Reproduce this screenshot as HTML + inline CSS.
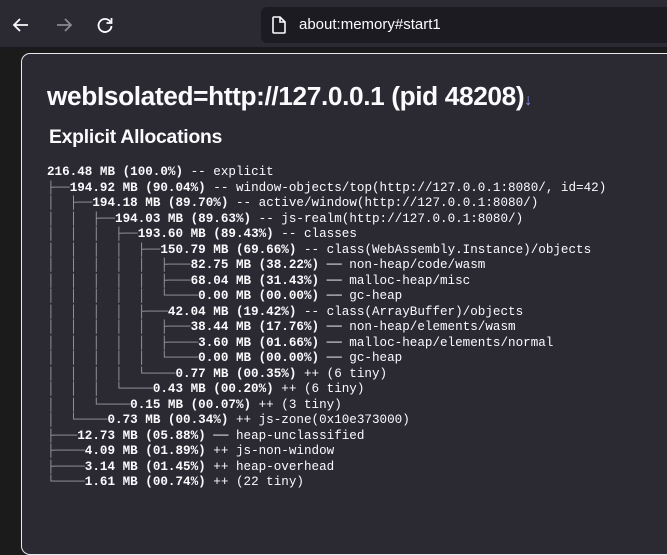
<!DOCTYPE html>
<html><head><style>
html,body{margin:0;padding:0;width:667px;height:500px;overflow:hidden;background:#1c1b1c;font-family:"Liberation Sans",sans-serif}
.bar{position:absolute;left:0;top:0;width:667px;height:47px;background:#2b2a33;border-bottom:2px solid #1a191f}
.url{position:absolute;left:261px;top:7px;width:420px;height:36px;background:#1c1b22;border-radius:6px}
.url span{position:absolute;left:38px;top:9px;color:#fbfbfe;font-size:15px}
.panel{position:absolute;left:21px;top:53px;width:700px;height:500px;background:#2b2a33;border:1.5px solid #e8e8ee;border-radius:9px}
h1{position:absolute;left:47px;top:81px;margin:0;font-size:26.3px;color:#fbfbfe;font-weight:bold;letter-spacing:-0.4px}
h1 small{color:#8f8fe8;font-size:16px;font-weight:normal}
h2{position:absolute;left:49px;top:127px;margin:0;font-size:19.3px;color:#fbfbfe;font-weight:bold;letter-spacing:-0.2px}
pre{position:absolute;left:47px;top:165px;margin:0;font-family:"Liberation Mono","DejaVu Sans Mono",monospace;font-size:12.6px;line-height:15.5px;color:#fbfbfe}
b{font-weight:bold}
.t{color:#9a9aa0}
</style></head><body>
<div class="bar">
<svg style="position:absolute;left:10px;top:14px" width="22" height="22" viewBox="0 0 22 22"><path d="M18 11H4M10 5L4 11L10 17" stroke="#fbfbfe" stroke-width="1.8" fill="none"/></svg>
<svg style="position:absolute;left:53px;top:14px" width="22" height="22" viewBox="0 0 22 22"><path d="M4 11H18M12 5L18 11L12 17" stroke="#8a8990" stroke-width="1.8" fill="none"/></svg>
<svg style="position:absolute;left:94px;top:14px" width="22" height="22" viewBox="0 0 22 22"><path d="M16.5 8A6.5 6.5 0 1 0 17.5 12" stroke="#fbfbfe" stroke-width="1.8" fill="none"/><path d="M17.5 4V9H12.5" stroke="#fbfbfe" stroke-width="1.8" fill="none"/></svg>
<div class="url"><svg style="position:absolute;left:11px;top:9px" width="14" height="18" viewBox="0 0 14 18"><path d="M2 1H8L13 6V16A1 1 0 0 1 12 17H2A1 1 0 0 1 1 16V2A1 1 0 0 1 2 1ZM8 1V6H13" stroke="#fbfbfe" stroke-width="1.6" fill="none"/></svg><span>about:memory#start1</span></div>
</div>
<div class="panel"></div>
<h1>webIsolated=http://127.0.0.1 (pid 48208)<small>↓</small></h1>
<h2>Explicit Allocations</h2>
<pre><b>216.48 MB (100.0%)</b> -- explicit
<span class="t">├──</span><b>194.92 MB (90.04%)</b> -- window-objects/top(http://127.0.0.1:8080/, id=42)
<span class="t">│  ├──</span><b>194.18 MB (89.70%)</b> -- active/window(http://127.0.0.1:8080/)
<span class="t">│  │  ├──</span><b>194.03 MB (89.63%)</b> -- js-realm(http://127.0.0.1:8080/)
<span class="t">│  │  │  ├──</span><b>193.60 MB (89.43%)</b> -- classes
<span class="t">│  │  │  │  ├──</span><b>150.79 MB (69.66%)</b> -- class(WebAssembly.Instance)/objects
<span class="t">│  │  │  │  │  ├───</span><b>82.75 MB (38.22%)</b> ── non-heap/code/wasm
<span class="t">│  │  │  │  │  ├───</span><b>68.04 MB (31.43%)</b> ── malloc-heap/misc
<span class="t">│  │  │  │  │  └────</span><b>0.00 MB (00.00%)</b> ── gc-heap
<span class="t">│  │  │  │  ├───</span><b>42.04 MB (19.42%)</b> -- class(ArrayBuffer)/objects
<span class="t">│  │  │  │  │  ├───</span><b>38.44 MB (17.76%)</b> ── non-heap/elements/wasm
<span class="t">│  │  │  │  │  ├────</span><b>3.60 MB (01.66%)</b> ── malloc-heap/elements/normal
<span class="t">│  │  │  │  │  └────</span><b>0.00 MB (00.00%)</b> ── gc-heap
<span class="t">│  │  │  │  └────</span><b>0.77 MB (00.35%)</b> ++ (6 tiny)
<span class="t">│  │  │  └────</span><b>0.43 MB (00.20%)</b> ++ (6 tiny)
<span class="t">│  │  └────</span><b>0.15 MB (00.07%)</b> ++ (3 tiny)
<span class="t">│  └────</span><b>0.73 MB (00.34%)</b> ++ js-zone(0x10e373000)
<span class="t">├───</span><b>12.73 MB (05.88%)</b> ── heap-unclassified
<span class="t">├────</span><b>4.09 MB (01.89%)</b> ++ js-non-window
<span class="t">├────</span><b>3.14 MB (01.45%)</b> ++ heap-overhead
<span class="t">└────</span><b>1.61 MB (00.74%)</b> ++ (22 tiny)</pre>
</body></html>
